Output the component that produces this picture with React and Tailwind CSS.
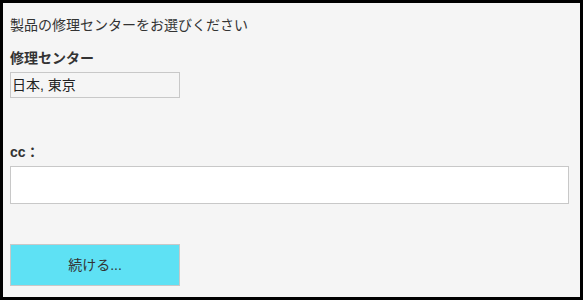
export default function App() {
  return (
    <div
      className="w-[583px] h-[300px] border-[3px] border-black bg-[#f5f5f5] px-[7px] pt-[12px] text-[#333] text-[14px] leading-[20px]"
      style={{ fontFamily: '"Liberation Sans", "Noto Sans CJK JP", sans-serif' }}
    >
      <p>製品の修理センターをお選びください</p>

      <label className="block mt-[13px] font-bold">修理センター</label>
      <div className="mt-[4px] w-[170px] h-[26px] border border-[#c8c8c8] pl-[1px] flex items-center text-[#222]">
        日本, 東京
      </div>

      <label className="block mt-[44px] font-bold">cc：</label>
      <div className="mt-[4px] w-[559px] h-[38px] border border-[#c8c8c8] bg-white"></div>

      <button className="mt-[40px] w-[170px] h-[42px] border border-[#c8c8c8] bg-[#5ee1f4] text-[#333] flex items-center justify-center">
        続ける...
      </button>
    </div>
  );
}
